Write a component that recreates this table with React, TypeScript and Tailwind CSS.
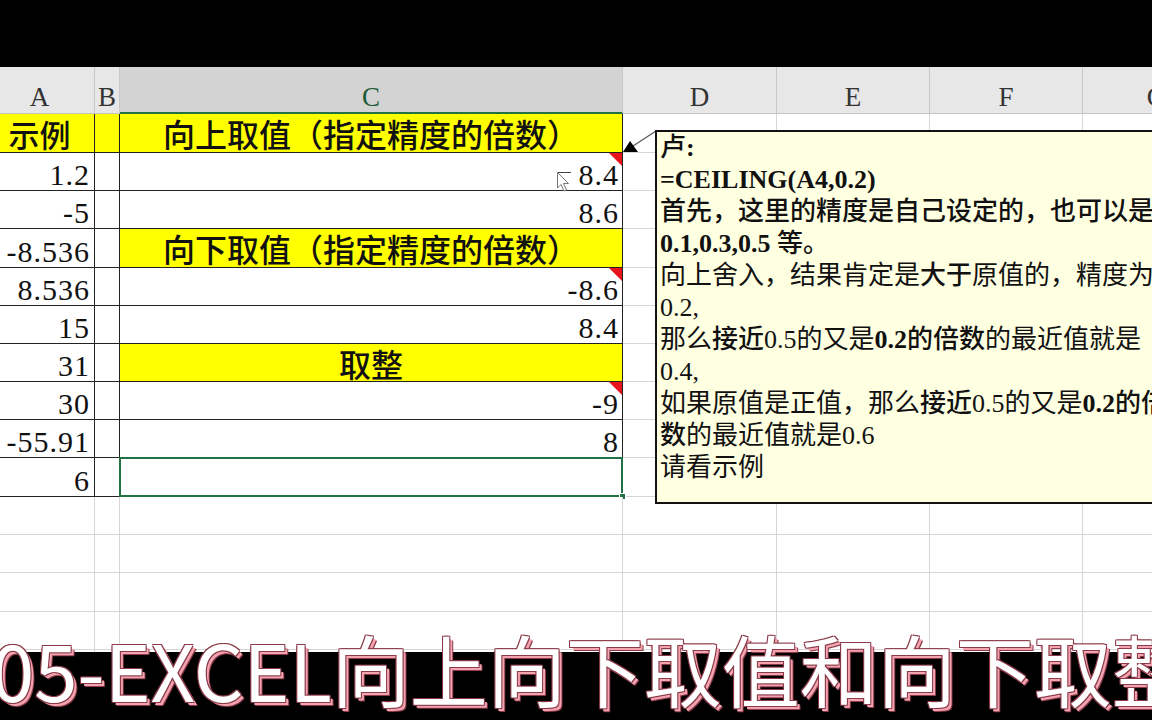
import React from 'react';

const colW = ['w-[110px]', 'w-[25px]', 'w-[503px]', 'w-[154px]', 'w-[153px]', 'w-[153px]', 'w-[148px]'];
const headers = ['A', 'B', 'C', 'D', 'E', 'F', 'G'];
const rowH = ['h-[39px]', 'h-[38px]', 'h-[38px]', 'h-[39px]', 'h-[38px]', 'h-[38px]', 'h-[38px]', 'h-[38px]', 'h-[38px]', 'h-[39px]', 'h-[38px]', 'h-[38px]', 'h-[39px]', 'h-[38px]', 'h-[38px]'];

type Row = { a?: string; c?: string; yellowA?: boolean; yellowC?: boolean; note?: boolean; selected?: boolean };

const rows: Row[] = [
  { a: '示例', c: '向上取值（指定精度的倍数）', yellowA: true, yellowC: true },
  { a: '1.2', c: '8.4', note: true },
  { a: '-5', c: '8.6' },
  { a: '-8.536', c: '向下取值（指定精度的倍数）', yellowC: true },
  { a: '8.536', c: '-8.6', note: true },
  { a: '15', c: '8.4' },
  { a: '31', c: '取整', yellowC: true },
  { a: '30', c: '-9', note: true },
  { a: '-55.91', c: '8' },
  { a: '6', c: '', selected: true },
  {}, {}, {}, {}, {},
];

const serif = "font-['Liberation_Serif','Noto_Sans_CJK_SC',serif]";

function NoteMark() {
  return (
    <svg className="absolute top-0 right-0" width="13" height="13" viewBox="0 0 13 13">
      <polygon points="0,0 13,0 13,13" fill="#e8141c" />
    </svg>
  );
}

function SheetRow({ row, idx }: { row: Row; idx: number }) {
  const inTable = idx < 10;
  const dark = 'border-[#222]';
  const light = 'border-[#d6d6d6]';
  return (
    <div className={`flex ${rowH[idx]}`}>
      {/* A */}
      <div
        className={`${colW[0]} shrink-0 box-border border-r border-b ${inTable ? dark : light} ${
          row.yellowA ? 'bg-[#ffff00] justify-center items-center' : 'bg-white justify-end items-end pr-[4px]'
        } flex`}
      >
        {row.yellowA ? (
          <span className="text-[31px] leading-none font-medium font-['Noto_Sans_CJK_SC',sans-serif] text-[#111]">{row.a}</span>
        ) : (
          <span className={`${serif} text-[30px] leading-[30px] tracking-[1px] text-[#111]`}>{row.a}</span>
        )}
      </div>
      {/* B */}
      <div className={`${colW[1]} shrink-0 box-border border-r border-b ${inTable ? dark : light} ${row.yellowA ? 'bg-[#ffff00]' : 'bg-white'}`} />
      {/* C */}
      <div
        className={`${colW[2]} shrink-0 relative box-border border-r border-b ${inTable ? dark : light} ${
          row.yellowC ? 'bg-[#ffff00] justify-center items-center' : 'bg-white justify-end items-end pr-[3px]'
        } flex`}
      >
        {row.yellowC ? (
          <span className="text-[32px] leading-none font-medium font-['Noto_Sans_CJK_SC',sans-serif] text-[#111]">{row.c}</span>
        ) : (
          <span className={`${serif} text-[30px] leading-[30px] tracking-[1px] text-[#111]`}>{row.c}</span>
        )}
        {row.note && <NoteMark />}
        {row.selected && (
          <>
            <div className="absolute -top-[1px] -left-[1px] -right-[1px] -bottom-[1px] border-2 border-[#217346]" />
            <div className="absolute -right-[4px] -bottom-[4px] w-[7px] h-[7px] bg-[#217346] border border-white" />
          </>
        )}
      </div>
      {/* D..G */}
      {[3, 4, 5, 6].map((c) => (
        <div key={c} className={`${colW[c]} shrink-0 box-border border-r border-b ${light} bg-white`} />
      ))}
    </div>
  );
}

function Comment() {
  return (
    <div className="absolute left-[655px] top-[130px] w-[530px] h-[374px] border-2 border-[#111] bg-[#ffffe1] pl-[3px] text-[26px] leading-[32px] text-[#111] font-['Liberation_Serif','Noto_Sans_CJK_SC',serif] whitespace-nowrap overflow-hidden">
      <div className="font-medium">
        卢<b>:</b>
      </div>
      <div className="font-bold">=CEILING(A4,0.2)</div>
      <div className="font-medium">首先，这里的精度是自己设定的，也可以是</div>
      <div className="font-medium">
        <b>0.1,0.3,0.5</b> 等。
      </div>
      <div>
        向上舍入，结果肯定是<span className="font-medium">大于</span>原值的，精度为
      </div>
      <div>0.2,</div>
      <div>
        那么<span className="font-medium">接近</span>0.5的又是<b>0.2</b>
        <span className="font-medium">的倍数</span>的最近值就是
      </div>
      <div>0.4,</div>
      <div>
        如果原值是正值，那么<span className="font-medium">接近</span>0.5的又是<b>0.2</b>
        <span className="font-medium">的倍</span>
      </div>
      <div>
        <span className="font-medium">数</span>的最近值就是0.6
      </div>
      <div>请看示例</div>
    </div>
  );
}

export default function App() {
  return (
    <div className="relative w-[1152px] h-[720px] overflow-hidden bg-black flex flex-col">
      <div className="h-[67px] shrink-0 bg-black" />
      <div className="h-[585px] shrink-0 bg-white overflow-hidden">
        <div className="-ml-[15px]">
          {/* column headers */}
          <div className="flex h-[47px]">
            {headers.map((h, i) => (
              <div
                key={h}
                className={`${colW[i]} shrink-0 box-border flex items-center justify-center pt-[15px] border-r border-[#c8c8c8] ${
                  i === 2 ? 'bg-[#d3d3d3] border-b-2 border-b-[#217346] text-[#1f5a38]' : 'bg-[#e7e7e7] border-b border-b-[#c4c4c4] text-[#333]'
                } ${serif} text-[27px] leading-none`}
              >
                {h}
              </div>
            ))}
          </div>
          {rows.map((r, i) => (
            <SheetRow key={i} row={r} idx={i} />
          ))}
        </div>
      </div>
      <div className="h-[68px] shrink-0 bg-black" />

      {/* comment connector */}
      <svg className="absolute left-[618px] top-[126px]" width="44" height="32" viewBox="0 0 44 32">
        <line x1="38" y1="5" x2="15" y2="20" stroke="#555" strokeWidth="1.2" />
        <polygon points="5,26 12,15 20,26" fill="#000" />
      </svg>
      <Comment />

      {/* mouse cursor */}
      <svg className="absolute left-[556px] top-[171px]" width="18" height="24" viewBox="0 0 18 24">
        <line x1="2" y1="1.5" x2="15" y2="1.5" stroke="#444" strokeWidth="1" />
        <path d="M1.5 1.5 L1.5 17 L5 13.5 L8 20 L10.5 19 L7.5 12.5 L12.5 12.5 Z" fill="#fff" stroke="#777" strokeWidth="1" />
      </svg>

      {/* video title */}
      <div className="absolute left-[-9px] top-[629px] whitespace-nowrap text-[78px] leading-none text-white font-['Noto_Sans_CJK_SC',sans-serif] [text-shadow:-1px_-1px_0_#8a3a48,1px_-1px_0_#8a3a48,-1px_1px_0_#8a3a48,1px_1px_0_#8a3a48,3px_3px_0_#f4a3b1,4px_4px_0_#8a3a48]">
        05-EXCEL向上向下取值和向下取整
      </div>
    </div>
  );
}
